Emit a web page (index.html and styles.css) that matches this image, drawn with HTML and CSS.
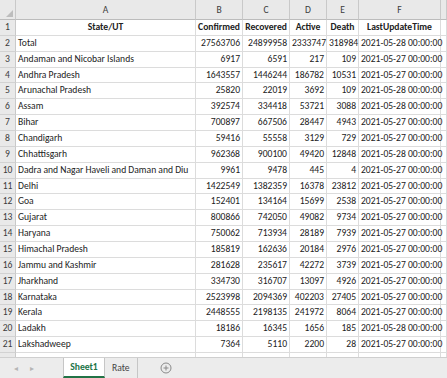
FILE: index.html
```html
<!DOCTYPE html>
<html lang="en">
<head>
    <meta charset="UTF-8">
    <title>State data - Sheet1</title>
    <link rel="stylesheet" href="styles.css">
</head>
<body>
    <div class="book">
        <div class="sheet" id="sheet">
            <div class="hd corner"><span class="tri"></span></div>
            <div class="hd">A</div>
            <div class="hd">B</div>
            <div class="hd">C</div>
            <div class="hd">D</div>
            <div class="hd">E</div>
            <div class="hd">F</div>
            <div class="hd"></div>
        </div>
        <div class="tabs">
            <div class="nav">
                <span class="arrow">&#9666;</span>
                <span class="arrow">&#9656;</span>
            </div>
            <div class="tab active">Sheet1</div>
            <div class="tab">Rate</div>
            <div class="add">
                <svg width="12" height="12" viewBox="0 0 12 12">
                    <circle cx="6" cy="6" r="5" fill="none" stroke="#8a8a8a" stroke-width="1"/>
                    <path d="M6 3.5v5M3.5 6h5" stroke="#8a8a8a" stroke-width="1"/>
                </svg>
            </div>
        </div>
    </div>

    <script>
        var rows = [
            ["State/UT", "Confirmed", "Recovered", "Active", "Death", "LastUpdateTime"],
            ["Total", 27563706, 24899958, 2333747, 318984, "2021-05-28 00:00:00"],
            ["Andaman and Nicobar Islands", 6917, 6591, 217, 109, "2021-05-27 00:00:00"],
            ["Andhra Pradesh", 1643557, 1446244, 186782, 10531, "2021-05-27 00:00:00"],
            ["Arunachal Pradesh", 25820, 22019, 3692, 109, "2021-05-28 00:00:00"],
            ["Assam", 392574, 334418, 53721, 3088, "2021-05-28 00:00:00"],
            ["Bihar", 700897, 667506, 28447, 4943, "2021-05-27 00:00:00"],
            ["Chandigarh", 59416, 55558, 3129, 729, "2021-05-27 00:00:00"],
            ["Chhattisgarh", 962368, 900100, 49420, 12848, "2021-05-28 00:00:00"],
            ["Dadra and Nagar Haveli and Daman and Diu", 9961, 9478, 445, 4, "2021-05-27 00:00:00"],
            ["Delhi", 1422549, 1382359, 16378, 23812, "2021-05-27 00:00:00"],
            ["Goa", 152401, 134164, 15699, 2538, "2021-05-27 00:00:00"],
            ["Gujarat", 800866, 742050, 49082, 9734, "2021-05-27 00:00:00"],
            ["Haryana", 750062, 713934, 28189, 7939, "2021-05-27 00:00:00"],
            ["Himachal Pradesh", 185819, 162636, 20184, 2976, "2021-05-27 00:00:00"],
            ["Jammu and Kashmir", 281628, 235617, 42272, 3739, "2021-05-27 00:00:00"],
            ["Jharkhand", 334730, 316707, 13097, 4926, "2021-05-27 00:00:00"],
            ["Karnataka", 2523998, 2094369, 402203, 27405, "2021-05-27 00:00:00"],
            ["Kerala", 2448555, 2198135, 241972, 8064, "2021-05-27 00:00:00"],
            ["Ladakh", 18186, 16345, 1656, 185, "2021-05-28 00:00:00"],
            ["Lakshadweep", 7364, 5110, 2200, 28, "2021-05-27 00:00:00"]
        ];
        var sheet = document.getElementById("sheet");

        function cell(text, cls) {
            var d = document.createElement("div");
            d.className = cls;
            d.textContent = text;
            sheet.appendChild(d);
        }

        for (let i = 0; i < rows.length; i++) {
            cell(i + 1, "hd num");
            for (let j = 0; j < rows[i].length; j++) {
                var v = rows[i][j];
                var cls = "c";
                if (i === 0) {
                    cls += " title";
                } else if (typeof v === "number") {
                    cls += " right";
                }
                cell(v, cls);
            }
            cell("", "c");
        }
        //下一行只露出一点，不写行号
        cell("", "hd num");
        for (let j = 0; j < 7; j++) {
            cell("", "c");
        }
    </script>
</body>
</html>
```
FILE: styles.css
```css
*{
    margin:0;
    padding:0;
    box-sizing:border-box;
}

body{
    width:447px;
    height:378px;
    overflow:hidden;
    background:#ffffff;
    font-family:"Carlito","Liberation Sans Narrow","Liberation Sans",sans-serif;
    font-size:9.6px;
    color:#222222;
}

.book{
    display:flex;
    flex-direction:column;
    height:378px;
}

/* the grid of cells */
.sheet{
    height:357px;
    overflow:hidden;
    display:grid;
    grid-template-columns:16px 180px 47px 47px 37px 32px 82px 1fr;
    grid-template-rows:20px;
    grid-auto-rows:15.86px;
}
.sheet .c{
    border-right:1px solid #dcdcdc;
    border-bottom:1px solid #dcdcdc;
    padding:0 2px;
    white-space:nowrap;
    line-height:15px;
}
.sheet .right{
    text-align:right;
}
.sheet .title{
    font-weight:bold;
    text-align:center;
    overflow:visible;
}
.sheet .hd{
    background:#e9e9e9;
    color:#3c3c3c;
    text-align:center;
    padding-top:4px;
    border-right:1px solid #c9c9c9;
    border-bottom:1px solid #bcbcbc;
}
.sheet .num{
    padding-top:0;
    line-height:15px;
    border-bottom:1px solid #d2d2d2;
}
.sheet .corner{
    display:flex;
    align-items:flex-end;
    justify-content:flex-end;
    padding:0 2px 2px 0;
}
.sheet .corner .tri{
    width:0;
    height:0;
    border-left:7px solid transparent;
    border-bottom:7px solid #bdbdbd;
}

/* sheet tabs at the bottom */
.tabs{
    flex:1;
    display:flex;
    background:#ececec;
    border-top:1px solid #cfcfcf;
}
.tabs .nav{
    width:63px;
    display:flex;
    align-items:center;
    padding-left:14px;
    gap:12px;
    color:#b5b5b5;
    font-size:8px;
}
.tabs .tab{
    height:100%;
    padding:0 7px;
    display:flex;
    align-items:center;
    border-right:1px solid #c6c6c6;
    color:#444444;
    font-size:9.6px;
}
.tabs .active{
    width:42px;
    justify-content:center;
    background:#ffffff;
    color:#217346;
    font-weight:bold;
    border-left:1px solid #c6c6c6;
    border-bottom:2px solid #217346;
}
.tabs .add{
    display:flex;
    align-items:center;
    padding-left:22px;
}
```
